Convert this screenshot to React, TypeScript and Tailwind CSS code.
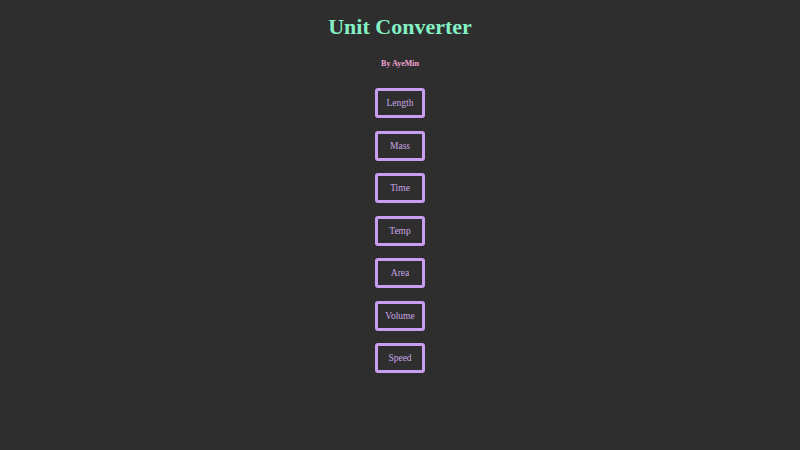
const units = ["Length", "Mass", "Time", "Temp", "Area", "Volume", "Speed"];

export default function App() {
  return (
    <div className="min-h-screen w-full bg-[#2e2e2e] flex flex-col items-center pt-[13px] font-['Liberation_Serif',serif]">
      <h1 className="text-[22px] leading-[28px] font-bold text-[#84f0c4]">Unit Converter</h1>
      <p className="mt-[17px] text-[8px] leading-[12px] font-bold text-[#f4a6d6]">By AyeMin</p>
      <div className="mt-[18px] flex flex-col items-center gap-[12.5px]">
        {units.map((u) => (
          <button
            key={u}
            className="w-[50px] h-[30px] border-[3px] border-[#c99ef2] rounded-[3px] bg-transparent pt-[1px] text-[9.5px] text-[#c9a6e6] flex items-center justify-center"
          >
            {u}
          </button>
        ))}
      </div>
    </div>
  );
}
